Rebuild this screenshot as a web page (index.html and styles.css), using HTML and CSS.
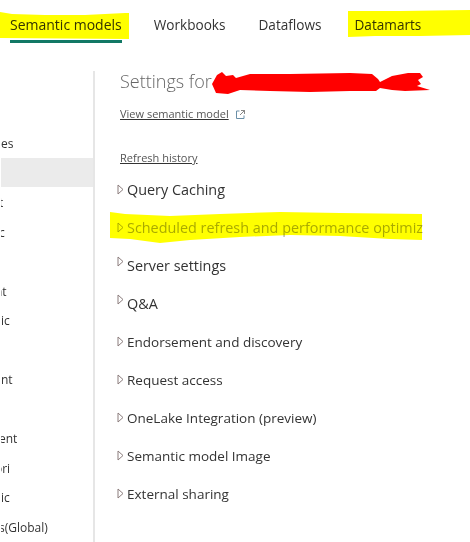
FILE: index.html
```html
<!DOCTYPE html>
<html lang="en">
<head>
<meta charset="utf-8">
<title>Settings</title>
<link rel="stylesheet" href="styles.css">
</head>
<body>
<div class="page">
  <nav class="tabs">
    <a class="tab tab-active">Semantic models</a>
    <a class="tab">Workbooks</a>
    <a class="tab">Dataflows</a>
    <a class="tab">Datamarts</a>
  </nav>
  <div class="body">
    <aside class="side">
      <div class="side-item">es</div>
      <div class="side-item side-selected"></div>
      <div class="side-item side-cut">t</div>
      <div class="side-item side-cut">c</div>
      <div class="side-item"></div>
      <div class="side-item side-cut-more">nt</div>
      <div class="side-item">ic</div>
      <div class="side-item"></div>
      <div class="side-item">nt</div>
      <div class="side-item"></div>
      <div class="side-item side-cut">ent</div>
      <div class="side-item side-cut-more">ori</div>
      <div class="side-item">ic</div>
      <div class="side-item side-cut">s(Global)</div>
    </aside>
    <main class="main">
      <h1 class="title">Settings for</h1>
      <div class="view-row">
        <a class="link">View semantic model</a>
        <svg class="ext" viewBox="0 0 9 9" width="9" height="9"><path d="M3.500 1H.5v7.500H8V5.500" fill="none" stroke="#6a8fa8"/><path d="M5 .5h3.500V4M8.500.5 4 5" fill="none" stroke="#6a6a6a" stroke-width=".8"/></svg>
      </div>
      <a class="link history">Refresh history</a>
      <ul class="sections">
        <li class="section section-large"><svg class="arrow" viewBox="0 0 7 11"><path d="M1 1l5 4.500L1 10z"/></svg>Query Caching</li>
        <li class="section section-large section-muted"><svg class="arrow arrow-muted" viewBox="0 0 7 11"><path d="M1 1l5 4.500L1 10z"/></svg>Scheduled refresh and performance optimiz</li>
        <li class="section section-large"><svg class="arrow arrow-raised" viewBox="0 0 7 11"><path d="M1 1l5 4.500L1 10z"/></svg>Server settings</li>
        <li class="section section-large"><svg class="arrow arrow-raised" viewBox="0 0 7 11"><path d="M1 1l5 4.500L1 10z"/></svg>Q&amp;A</li>
        <li class="section"><svg class="arrow" viewBox="0 0 7 11"><path d="M1 1l5 4.500L1 10z"/></svg>Endorsement and discovery</li>
        <li class="section"><svg class="arrow" viewBox="0 0 7 11"><path d="M1 1l5 4.500L1 10z"/></svg>Request access</li>
        <li class="section"><svg class="arrow" viewBox="0 0 7 11"><path d="M1 1l5 4.500L1 10z"/></svg>OneLake Integration (preview)</li>
        <li class="section"><svg class="arrow" viewBox="0 0 7 11"><path d="M1 1l5 4.500L1 10z"/></svg>Semantic model Image</li>
        <li class="section"><svg class="arrow" viewBox="0 0 7 11"><path d="M1 1l5 4.500L1 10z"/></svg>External sharing</li>
      </ul>
    </main>
  </div>
  <svg class="marks" viewBox="0 0 470 542" width="470" height="542" aria-hidden="true">
    <path class="mark-yellow" d="M0 12 L12 14 L45 15 L85 15 L125 13 L129 13 L129 39 L0 38 Z"/>
    <path class="mark-yellow" d="M348 11 L400 11 L470 10 L470 35 L420 36 L375 36 L348 37 Z"/>
    <path class="mark-yellow" d="M110 212 L125 214 L170 216 L220 214 L280 212 L340 213 L422 214 L422 240 L390 239 L340 236 L290 235 L240 237 L190 240 L160 243 L130 239 L110 238 Z"/>
    <path class="mark-red" d="M212 84 L217 75 L222 72 L226 76 L233 75 L236 78 L250 74 L290 74 L350 73 L372 74 L378 79 L380 82 L392 76 L408 73 L420 73 L423 77 L418 80 L421 84 L417 86 L430 90 L405 91 L392 90 L380 88 L376 91 L350 91 L310 92 L270 91 L240 90 L228 94 L216 93 Z"/>
  </svg>
</div>
</body>
</html>
```
FILE: styles.css
```css
* { box-sizing: border-box; }
html, body { margin: 0; padding: 0; background: #fff; }
.page {
  position: relative;
  width: 470px;
  height: 542px;
  overflow: hidden;
  font-family: "Open Sans", "Noto Sans", sans-serif;
  color: #333;
}
.tabs {
  display: flex;
  gap: 33px;
  height: 71px;
  padding-left: 10px;
  align-items: flex-start;
}
.tab {
  display: block;
  height: 43px;
  padding-top: 15px;
  font-size: 13.600px;
  line-height: 20px;
}
.tab-active {
  font-size: 14px;
  border-bottom: 3px solid #117865;
  margin-right: -1px;
}
.body {
  display: flex;
  height: 471px;
}
.side {
  width: 95px;
  padding: 57px 0 0 1px;
  border-right: 2px solid #e6e6e6;
  font-size: 12px;
  flex: none;
}
.side-item {
  height: 29.500px;
  line-height: 31px;
  overflow: hidden;
  white-space: nowrap;
}
.side-cut { text-indent: -2px; }
.side-cut-more { text-indent: -6px; }
.side-selected { background: #ebebeb; }
.main {
  flex: 1;
  min-width: 0;
  padding-left: 25px;
}
.title {
  margin: 0;
  font-size: 18px;
  font-weight: 300;
  line-height: 20px;
  color: #666;
}
.view-row {
  display: flex;
  align-items: center;
  gap: 7px;
  margin-top: 14px;
  height: 18px;
}
.link {
  display: block;
  font-size: 11px;
  line-height: 16px;
  color: #555;
  text-decoration: underline;
  text-decoration-color: #333;
}
.ext { display: block; }
.history { margin-top: 27px; }
.sections {
  list-style: none;
  margin: 5px 0 0;
  padding: 0;
}
.section {
  position: relative;
  height: 38px;
  line-height: 38px;
  padding-left: 7px;
  font-size: 13.500px;
  white-space: nowrap;
}
.section-large { font-size: 14.400px; }
.section-muted { color: #aaa; }
.arrow {
  position: absolute;
  left: -3px;
  top: 13px;
  width: 7px;
  height: 11px;
  fill: none;
  stroke: #8b7d7d;
  stroke-width: 1;
}
.arrow-raised { top: 9px; }
.arrow-muted { stroke: #aaa; }
.marks {
  position: absolute;
  left: 0;
  top: 0;
  pointer-events: none;
}
.mark-yellow { fill: #ffff00; mix-blend-mode: multiply; }
.mark-red { fill: #ff0000; }
```
